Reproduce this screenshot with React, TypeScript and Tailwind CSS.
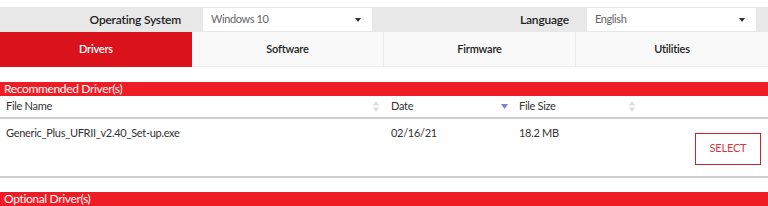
import React from "react";

const font = { fontFamily: "Lato, 'Noto Sans', sans-serif" };

function Caret() {
  return (
    <svg width="6" height="4" viewBox="0 0 6 4" className="block">
      <path d="M0 0 L6 0 L3 4 Z" fill="#333" />
    </svg>
  );
}

function SortIcon({ active }: { active?: boolean }) {
  if (active) {
    return (
      <svg width="7" height="5" viewBox="0 0 7 5" className="block">
        <path d="M0 0 L7 0 L3.5 5 Z" fill="#7a82d8" />
      </svg>
    );
  }
  return (
    <svg width="6" height="11" viewBox="0 0 6 11" className="block">
      <path d="M0 4.5 L6 4.5 L3 0 Z" fill="#dcdcdc" />
      <path d="M0 6.5 L6 6.5 L3 11 Z" fill="#dcdcdc" />
    </svg>
  );
}

function SelectBox({ value }: { value: string }) {
  return (
    <div className="flex h-[23px] w-[169px] items-center justify-between bg-white pl-[8px] pr-[11px]">
      <span className="text-[11px] tracking-[-0.4px] text-[#666]">{value}</span>
      <Caret />
    </div>
  );
}

export default function App() {
  return (
    <div className="h-[206px] w-[768px] overflow-hidden bg-white" style={font}>
      <div className="h-[7px]" />
      <div className="grid h-[25px] grid-cols-2 bg-[#e8e8e8]">
        <div className="flex items-center justify-end pr-[12px]">
          <span className="mr-[22px] text-[12px] font-semibold tracking-[-0.2px] text-[#222]">Operating System</span>
          <SelectBox value="Windows 10" />
        </div>
        <div className="flex items-center justify-end pr-[12px]">
          <span className="mr-[18px] text-[12px] font-semibold tracking-[-0.2px] text-[#222]">Language</span>
          <SelectBox value="English" />
        </div>
      </div>
      <div className="grid h-[35px] grid-cols-4">
        <div className="flex items-center justify-center bg-[#d9121b] text-[11px] font-semibold tracking-[-0.2px] text-white">Drivers</div>
        <div className="flex items-center justify-center border-b border-r border-[#ececec] bg-[#f9f9f9] text-[11px] font-semibold tracking-[-0.2px] text-[#222]">Software</div>
        <div className="flex items-center justify-center border-b border-r border-[#ececec] bg-[#f9f9f9] text-[11px] font-semibold tracking-[-0.2px] text-[#222]">Firmware</div>
        <div className="flex items-center justify-center border-b border-[#ececec] bg-[#f9f9f9] text-[11px] font-semibold tracking-[-0.2px] text-[#222]">Utilities</div>
      </div>
      <div className="h-[15px]" />
      <div className="flex h-[14px] items-center bg-[#ee1c25] pl-[4px] text-[12px] leading-none tracking-[-0.35px] text-white">Recommended Driver(s)</div>
      <div className="grid h-[23px] grid-cols-[384px_128px_128px_128px] items-center border-b-2 border-[#cfcfcf] text-[11px] tracking-[-0.3px] text-[#333]">
        <div className="flex items-center justify-between pl-[6px] pr-[5px]">
          <span>File Name</span>
          <SortIcon />
        </div>
        <div className="flex items-center justify-between pl-[7px] pr-[4px]">
          <span>Date</span>
          <SortIcon active />
        </div>
        <div className="flex items-center justify-between pl-[7px] pr-[5px]">
          <span>File Size</span>
          <SortIcon />
        </div>
        <div />
      </div>
      <div className="grid h-[59px] grid-cols-[384px_128px_128px_128px] border-b-2 border-[#cfcfcf] text-[11px] tracking-[-0.3px] text-[#333]">
        <div className="pl-[6px] pt-[6px]">Generic_Plus_UFRII_v2.40_Set-up.exe</div>
        <div className="pl-[7px] pt-[6px]">02/16/21</div>
        <div className="pl-[7px] pt-[6px]">18.2 MB</div>
        <div className="flex items-center justify-end pr-[7px] pt-[2px]">
          <div className="flex h-[32px] w-[66px] items-center justify-center border border-[#c8262c] text-[11px] tracking-[-0.2px] text-[#d23a3f]">SELECT</div>
        </div>
      </div>
      <div className="h-[14px]" />
      <div className="flex h-[14px] items-center bg-[#ee1c25] pl-[4px] text-[12px] leading-none tracking-[-0.35px] text-white">Optional Driver(s)</div>
    </div>
  );
}
